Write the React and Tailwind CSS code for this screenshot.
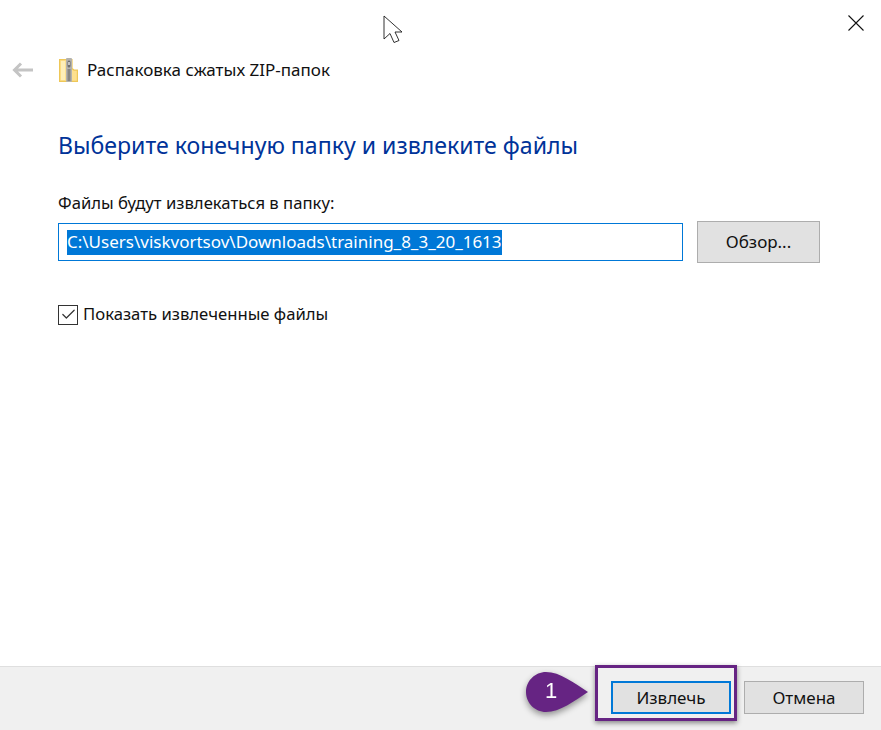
import React from "react";
import { Check } from "lucide-react";

const font = { fontFamily: '"Noto Sans", "Open Sans", sans-serif' };

function ZipFolder() {
  return (
    <svg width="19" height="25" viewBox="0 0 19 25">
      <path d="M0.600 1.600H13v9l2 1.500h3.400v11.300H0.600z" fill="#fde08f" stroke="#eec758" strokeWidth="1.200" />
      <path d="M2 3h4v19H2z" fill="#fdeeb8" />
      <rect x="7" y="0" width="6" height="24" rx="1" fill="#b4b2ad" />
      <rect x="8.500" y="2.500" width="3" height="7" rx="1.500" fill="#6f6f6f" />
      <rect x="9.300" y="4" width="1.400" height="3" fill="#e2e2e2" />
      <path d="M8.500 12h3M8.500 14h3M8.500 16h3M8.500 18h3M8.500 20h3M8.500 22h3" stroke="#5d5d58" strokeWidth="1" />
    </svg>
  );
}

function Cursor() {
  return (
    <svg width="20" height="29" viewBox="0 0 20 29" className="absolute left-[383px] top-[15px]">
      <path d="M1 1v23l6-5.500 4 9 5-2-4-8.500h7z" fill="#fff" stroke="#1c1c1c" strokeWidth="0.900" strokeLinejoin="miter" />
    </svg>
  );
}

function DialogButton({ children, className }) {
  return (
    <button className={`flex items-center justify-center bg-[#e1e1e1] text-[17px] text-[#111] ${className}`}>
      {children}
    </button>
  );
}

export default function App() {
  return (
    <div style={font} className="relative flex h-[730px] w-[881px] flex-col overflow-hidden bg-white text-[#111]">
      <div className="flex h-[44px] justify-end pr-[17px] pt-[15px]">
        <svg width="16" height="16" viewBox="0 0 16 16">
          <path d="M0.500 0.500l15 15M15.500 0.500l-15 15" stroke="#111" strokeWidth="1.100" />
        </svg>
      </div>

      <div className="flex h-[52px] items-center pl-[12px]">
        <svg width="21" height="16" viewBox="0 0 21 16">
          <path d="M9 1.500L2.500 8 9 14.500M3 8h18" fill="none" stroke="#c4c4c4" strokeWidth="3" />
        </svg>
        <div className="ml-[26px] mr-[8px] flex w-[20px] items-center">
          <ZipFolder />
        </div>
        <span className="text-[17px] leading-[24px]">Распаковка сжатых ZIP-папок</span>
      </div>

      <div className="flex flex-1 flex-col pl-[58px] pr-[61px] pt-[29px]">
        <h1 className="text-[23.100px] font-normal leading-[40px] text-[#003399]">Выберите конечную папку и извлеките файлы</h1>
        <p className="mt-[27px] text-[16.700px] leading-[22px]">Файлы будут извлекаться в папку:</p>
        <div className="mt-[7px] flex items-start gap-[14px]">
          <div className="mt-[2px] flex h-[38px] w-[625px] items-center border border-[#0078d7] pl-[8px]">
            <span className="flex h-[25px] items-center bg-[#0078d7] text-[17px] text-white">C:\Users\viskvortsov\Downloads\training_8_3_20_1613</span>
          </div>
          <DialogButton className="h-[42px] w-[123px] border border-[#adadad]">Обзор...</DialogButton>
        </div>
        <label className="mt-[41px] flex items-center gap-[5px]">
          <span className="flex h-[20px] w-[20px] items-center justify-center border border-[#333]">
            <Check size={17} strokeWidth={1.700} color="#333" />
          </span>
          <span className="-mt-[1px] text-[16.700px] leading-[22px]">Показать извлеченные файлы</span>
        </label>
      </div>

      <div className="flex h-[64px] items-start justify-end gap-[13px] border-t border-[#dfdfdf] bg-[#f0f0f0] pr-[17px] pt-[14px]">
        <DialogButton className="h-[33px] w-[120px] border-2 border-[#0078d7]">Извлечь</DialogButton>
        <DialogButton className="h-[33px] w-[120px] border border-[#adadad]">Отмена</DialogButton>
      </div>

      <Cursor />

      {/* step annotation over the dialog */}
      <div className="absolute left-[595px] top-[665px] h-[56px] w-[142px] border-[3px] border-[#662483] shadow-[0_2px_5px_rgba(0,0,0,0.45)]" />
      <div className="absolute left-[526px] top-[672px] h-[40px] w-[64px] drop-shadow-[0_3px_3px_rgba(0,0,0,0.4)]">
        <svg width="64" height="40" viewBox="0 0 64 40" className="absolute inset-0">
          <path d="M20 0C34 0 48 11 62 20 48 29 34 40 20 40 9 40 0 31 0 20S9 0 20 0z" fill="#662483" />
        </svg>
        <span className="absolute left-[19px] top-[5px] text-[22px] leading-[28px] text-white" style={{ fontFamily: '"Liberation Sans", sans-serif' }}>1</span>
      </div>
    </div>
  );
}
